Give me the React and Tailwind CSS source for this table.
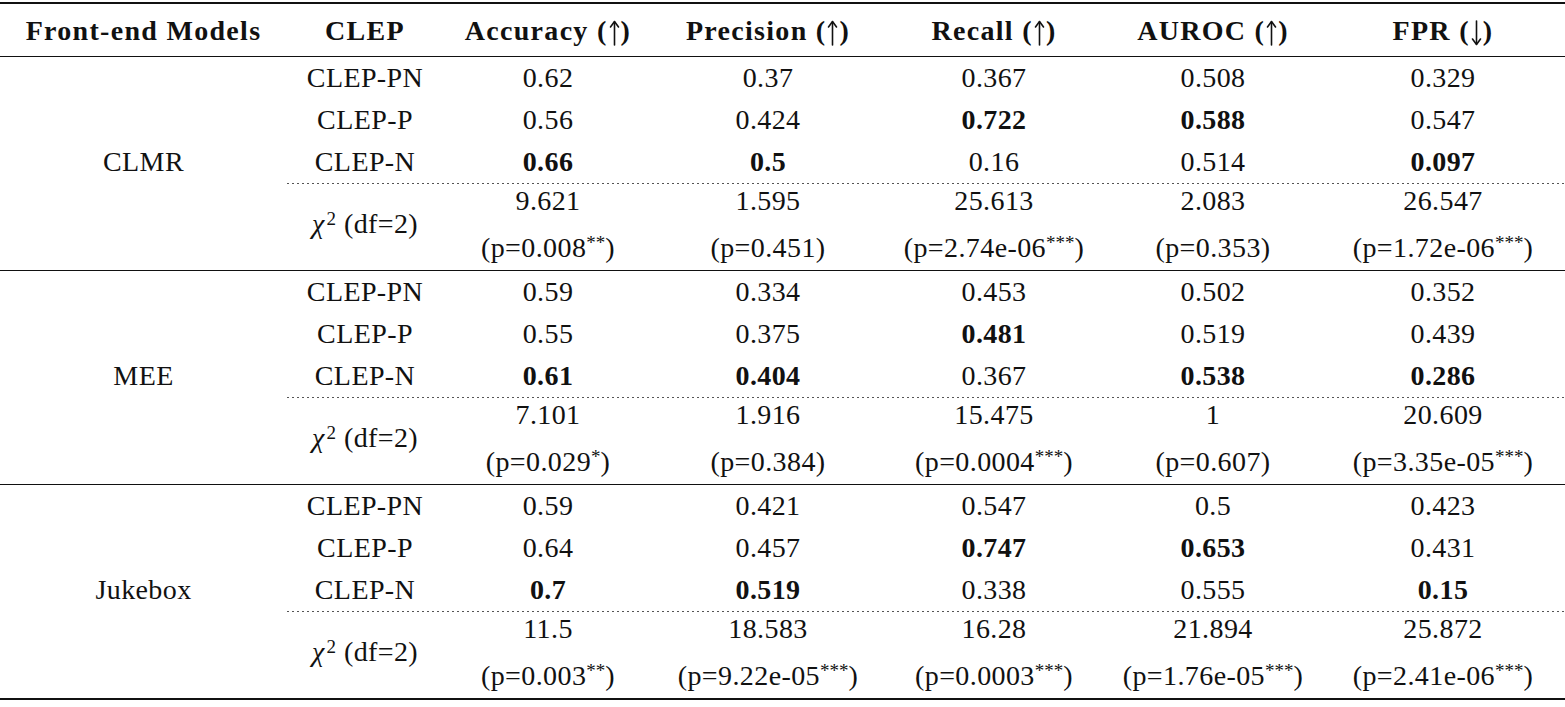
import React from "react";

const blocks = [
  {
    name: "CLMR",
    rows: [
      ["CLEP-PN", ["0.62", "0.37", "0.367", "0.508", "0.329"], []],
      ["CLEP-P", ["0.56", "0.424", "0.722", "0.588", "0.547"], [2, 3]],
      ["CLEP-N", ["0.66", "0.5", "0.16", "0.514", "0.097"], [0, 1, 4]],
    ],
    chi: [
      ["9.621", "0.008", "**"],
      ["1.595", "0.451", ""],
      ["25.613", "2.74e-06", "***"],
      ["2.083", "0.353", ""],
      ["26.547", "1.72e-06", "***"],
    ],
  },
  {
    name: "MEE",
    rows: [
      ["CLEP-PN", ["0.59", "0.334", "0.453", "0.502", "0.352"], []],
      ["CLEP-P", ["0.55", "0.375", "0.481", "0.519", "0.439"], [2]],
      ["CLEP-N", ["0.61", "0.404", "0.367", "0.538", "0.286"], [0, 1, 3, 4]],
    ],
    chi: [
      ["7.101", "0.029", "*"],
      ["1.916", "0.384", ""],
      ["15.475", "0.0004", "***"],
      ["1", "0.607", ""],
      ["20.609", "3.35e-05", "***"],
    ],
  },
  {
    name: "Jukebox",
    rows: [
      ["CLEP-PN", ["0.59", "0.421", "0.547", "0.5", "0.423"], []],
      ["CLEP-P", ["0.64", "0.457", "0.747", "0.653", "0.431"], [2, 3]],
      ["CLEP-N", ["0.7", "0.519", "0.338", "0.555", "0.15"], [0, 1, 4]],
    ],
    chi: [
      ["11.5", "0.003", "**"],
      ["18.583", "9.22e-05", "***"],
      ["16.28", "0.0003", "***"],
      ["21.894", "1.76e-05", "***"],
      ["25.872", "2.41e-06", "***"],
    ],
  },
];

const headers = [
  ["Accuracy", true],
  ["Precision", true],
  ["Recall", true],
  ["AUROC", true],
  ["FPR", false],
];

function Arrow({ up }) {
  return (
    <svg
      width="11"
      height="26"
      viewBox="0 0 11 26"
      className="inline-block align-[-6px] mx-[1px]"
      fill="none"
      stroke="#111"
      strokeWidth="1.6"
      strokeLinecap="round"
      strokeLinejoin="round"
    >
      {up ? (
        <>
          <path d="M5.5 2 V25" />
          <path d="M1.5 7 L5.5 1.5 L9.5 7" />
        </>
      ) : (
        <>
          <path d="M5.5 1 V24" />
          <path d="M1.5 19 L5.5 24.5 L9.5 19" />
        </>
      )}
    </svg>
  );
}

function Block({ block }) {
  return (
    <div className="flex">
      <div className="w-[287px] shrink-0 flex flex-col">
        <div className="h-[42px]" />
        <div className="h-[42px]" />
        <div className="h-[42px] flex items-center justify-center">{block.name}</div>
      </div>
      <div className="flex-1 flex flex-col">
        {block.rows.map(([label, vals, bold]) => (
          <div
            key={label}
            className="grid grid-cols-[156px_210px_230px_222px_216px_244px] h-[42px] items-center text-center"
          >
            <div>{label}</div>
            {vals.map((v, i) => (
              <div key={i} className={bold.includes(i) ? "font-bold" : ""}>
                {v}
              </div>
            ))}
          </div>
        ))}
        <div className="h-px bg-[linear-gradient(to_right,#555_1.6px,transparent_1.6px)] bg-[length:5px_1px]" />
        <div className="grid grid-cols-[156px_210px_230px_222px_216px_244px] grid-rows-[86px] h-[86px] text-center">
          <div className="flex items-center justify-center pb-[6px]">
            <span>
              <i>χ</i>
              <sup className="text-[19px] relative -top-[8px] ml-[2px]">2</sup> (df=2)
            </span>
          </div>
          {block.chi.map(([v, p, s], i) => (
            <div key={i} className="flex flex-col items-center">
              <div className="h-[34px] leading-[34px]">{v}</div>
              <div className="h-[34px] leading-[34px] mt-[13px] whitespace-nowrap">
                (p={p}
                {s && <sup className="text-[19px] relative -top-[8px] tracking-[0px]">{s}</sup>})
              </div>
            </div>
          ))}
        </div>
      </div>
    </div>
  );
}

export default function App() {
  return (
    <div
      className="w-[1565px] h-[707px] bg-white text-[#111] text-[28px] tracking-[0.4px] overflow-hidden"
      style={{ fontFamily: '"Liberation Serif", "Times New Roman", serif' }}
    >
      <div className="h-[2px]" />
      <div className="h-[2px] bg-[#111]" />
      <div className="grid grid-cols-[287px_156px_210px_230px_222px_216px_244px] h-[52px] items-center text-center font-bold tracking-[1.3px] pt-[1px]">
        <div>Front-end Models</div>
        <div>CLEP</div>
        {headers.map(([h, up]) => (
          <div key={h} className="whitespace-nowrap">
            {h} (<Arrow up={up} />)
          </div>
        ))}
      </div>
      <div className="h-px bg-[#111]" />
      {blocks.map((b, i) => (
        <React.Fragment key={b.name}>
          <Block block={b} />
          {i < blocks.length - 1 ? (
            <div className="h-px bg-[#111]" />
          ) : (
            <div className="h-[2px] bg-[#111]" />
          )}
        </React.Fragment>
      ))}
    </div>
  );
}
